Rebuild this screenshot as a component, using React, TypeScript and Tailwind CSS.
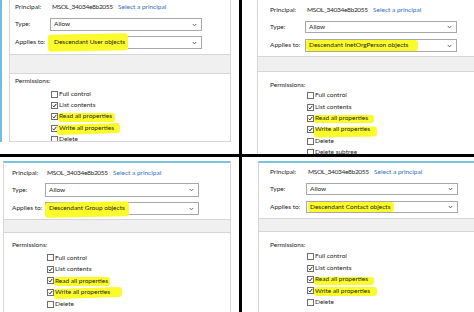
import React from 'react';

type Item = { label: string; on: boolean; hl?: string };

type Cfg = {
  wrap: string;
  top: string;
  r1: string;
  r2: string;
  r3: string;
  label: string;
  box: string;
  applies: string;
  appliesHl: string;
  band: string;
  bottom: string;
  list: string;
  row: string;
  items: Item[];
};

const BORDER = 'border-[#d6d6d6]';

function Chevron() {
  return (
    <svg viewBox="0 0 6 4" className="absolute right-[4px] top-1/2 h-[3px] w-[5px] -translate-y-1/2">
      <path d="M0.6 0.6 L3 3.2 L5.4 0.6" fill="none" stroke="#444" strokeWidth="1" />
    </svg>
  );
}

function Select({ text, box, hl }: { text: string; box: string; hl?: string }) {
  return (
    <div className={`relative flex h-full items-center border border-[#a8a8a8] bg-white pl-[3px] ${box}`}>
      {hl && <span className={`absolute rounded-[3px] bg-[#fbfb2c] ${hl}`} />}
      <span className="relative whitespace-nowrap">{text}</span>
      <Chevron />
    </div>
  );
}

function Check({ on }: { on: boolean }) {
  return (
    <span className="flex h-[7px] w-[7px] shrink-0 items-center justify-center border border-[#6e6e6e] bg-white">
      {on && (
        <svg viewBox="0 0 8 8" className="h-[7px] w-[7px]">
          <path d="M1.2 4.2 L3.1 6.2 L6.9 1.4" fill="none" stroke="#1e1e1e" strokeWidth="1.5" />
        </svg>
      )}
    </span>
  );
}

function Dialog({ c }: { c: Cfg }) {
  return (
    <div className={`flex flex-col ${c.wrap}`}>
      <div className={`bg-white ${BORDER} ${c.top}`}>
        <div className={`flex items-center whitespace-nowrap ${c.r1}`}>
          <span className={c.label}>Principal:</span>
          <span className="w-[68px] shrink-0 pl-[2px] tracking-[-0.3px]">MSOL_34034e8b2055</span>
          <span className="text-[#2f72c6]">Select a principal</span>
        </div>
        <div className={`flex items-center ${c.r2}`}>
          <span className={c.label}>Type:</span>
          <Select text="Allow" box={c.box} />
        </div>
        <div className={`flex items-center ${c.r3}`}>
          <span className={c.label}>Applies to:</span>
          <Select text={c.applies} box={c.box} hl={c.appliesHl} />
        </div>
      </div>
      <div className={`border-x bg-[#f0f0f0] ${BORDER} ${c.band}`} />
      <div className={`overflow-hidden bg-white ${BORDER} ${c.bottom}`}>
        <div className="flex h-[10px] items-center">Permissions:</div>
        <div className={`flex flex-col ${c.list}`}>
          {c.items.map((it) => (
            <div key={it.label} className={`flex items-center whitespace-nowrap ${c.row}`}>
              <Check on={it.on} />
              <span className="relative ml-[1px] flex h-full items-center">
                {it.hl && <span className={`absolute rounded-[3px] bg-[#fbfb2c] ${it.hl}`} />}
                <span className="relative">{it.label}</span>
              </span>
            </div>
          ))}
        </div>
      </div>
    </div>
  );
}

const TL: Cfg = {
  wrap: 'ml-[7px] w-[222px]',
  top: 'h-[55px] border-x border-b pl-[5px] pt-[1px]',
  r1: 'h-[13px]',
  r2: 'mt-[4px] h-[13px]',
  r3: 'mt-[5px] h-[13px]',
  label: 'w-[35px] shrink-0',
  box: 'w-[152px]',
  applies: 'Descendant User objects',
  appliesHl: '-left-[3px] -top-[3px] h-[17px] w-[80px] -rotate-1',
  band: 'h-[18px]',
  bottom: 'h-[69px] border pl-[5px] pt-[2px]',
  list: 'ml-[36px] mt-[2.5px]',
  row: 'h-[11.3px]',
  items: [
    { label: 'Full control', on: false },
    { label: 'List contents', on: true },
    { label: 'Read all properties', on: true, hl: '-left-[1px] top-[1.5px] h-[9px] w-[57px]' },
    { label: 'Write all properties', on: true, hl: '-left-[2px] top-[2px] h-[9.5px] w-[63px] -rotate-2' },
    { label: 'Delete', on: false },
  ],
};

const TR: Cfg = {
  wrap: 'ml-[15px] w-[230px]',
  top: 'h-[57px] border-x border-b pl-[12px] pt-[4px]',
  r1: 'h-[12px]',
  r2: 'mt-[5px] h-[12px]',
  r3: 'mt-[6px] h-[13px]',
  label: 'w-[35px] shrink-0',
  box: 'w-[152px]',
  applies: 'Descendant InetOrgPerson objects',
  appliesHl: 'left-0 top-0 h-[11px] w-[112px]',
  band: 'h-[14px]',
  bottom: 'h-[90px] border pl-[12px] pt-[8px]',
  list: 'ml-[37px]',
  row: 'h-[11.35px]',
  items: [
    { label: 'Full control', on: false },
    { label: 'List contents', on: true },
    { label: 'Read all properties', on: true, hl: '-left-[1px] top-[2px] h-[8.5px] w-[60px]' },
    { label: 'Write all properties', on: true, hl: '-left-[1px] top-[2.5px] h-[10px] w-[63px] -rotate-1' },
    { label: 'Delete', on: false },
    { label: 'Delete subtree', on: false },
  ],
};

const BL: Cfg = {
  wrap: 'ml-[3px] mt-[4px] w-[228px]',
  top: 'h-[59px] border-x border-b border-t-2 border-t-[#7cc3dc] pl-[8px] pt-[4px]',
  r1: 'h-[12px]',
  r2: 'mt-[4px] h-[14px]',
  r3: 'mt-[5px] h-[13px]',
  label: 'w-[33px] shrink-0',
  box: 'w-[154px]',
  applies: 'Descendant Group objects',
  appliesHl: '-left-[1px] -top-[1px] h-[15px] w-[84px] -rotate-1',
  band: 'h-[12px]',
  bottom: 'h-[100px] border pl-[8px] pt-[7px]',
  list: 'ml-[35px] mt-[2px]',
  row: 'h-[11.6px]',
  items: [
    { label: 'Full control', on: false },
    { label: 'List contents', on: true },
    { label: 'Read all properties', on: true, hl: '-left-[1px] top-[1.5px] h-[9.5px] w-[56px]' },
    { label: 'Write all properties', on: true, hl: '-left-[1px] top-[1px] h-[10px] w-[68px] -rotate-2' },
    { label: 'Delete', on: false },
  ],
};

const BR: Cfg = {
  wrap: 'ml-[16px] mt-[4px] w-[230px]',
  top: 'h-[58px] border-x border-b border-t-2 border-t-[#7cc3dc] pl-[11px] pt-[3px]',
  r1: 'h-[12px]',
  r2: 'mt-[5px] h-[12px]',
  r3: 'mt-[6px] h-[12px]',
  label: 'w-[36px] shrink-0',
  box: 'w-[152px]',
  applies: 'Descendant Contact objects',
  appliesHl: 'left-[1px] top-0 h-[10px] w-[86px]',
  band: 'h-[12px]',
  bottom: 'h-[100px] border pl-[11px] pt-[8px]',
  list: 'ml-[37px] mt-[1px]',
  row: 'h-[11.4px]',
  items: [
    { label: 'Full control', on: false },
    { label: 'List contents', on: true },
    { label: 'Read all properties', on: true, hl: '-left-[1px] top-[3px] h-[8.5px] w-[60px]' },
    { label: 'Write all properties', on: true, hl: '-left-[1px] top-[2px] h-[9px] w-[63px]' },
    { label: 'Delete', on: false },
  ],
};

export default function App() {
  return (
    <div className="grid h-[312px] w-[474px] grid-cols-[239px_232px] grid-rows-[154px_155px] gap-[3px] bg-black font-['Lato',sans-serif] text-[6.5px] leading-none text-[#1f1f1f]">
      <div className="overflow-hidden bg-white">
        <div className="flex h-[142px] overflow-hidden">
          <div className="h-full w-[2px] bg-[#6cbfe6]" />
          <Dialog c={TL} />
        </div>
      </div>
      <div className="overflow-hidden bg-white">
        <Dialog c={TR} />
      </div>
      <div className="overflow-hidden bg-white">
        <Dialog c={BL} />
      </div>
      <div className="overflow-hidden bg-white">
        <Dialog c={BR} />
      </div>
    </div>
  );
}
